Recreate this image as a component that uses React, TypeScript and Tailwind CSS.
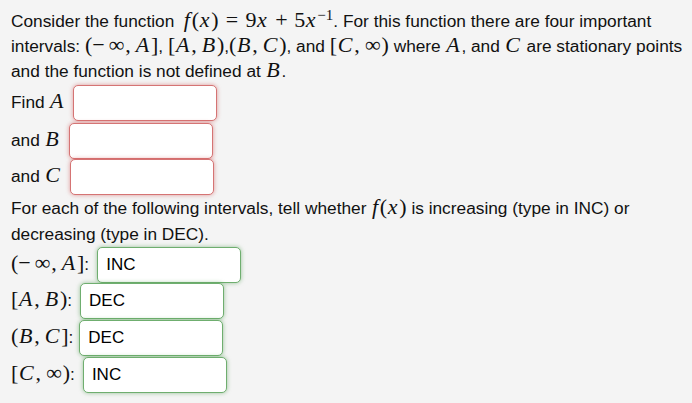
import React from 'react';

const Mi: React.FC<{ children: React.ReactNode }> = ({ children }) => (
  <i className="font-['Liberation_Serif',serif] italic pl-[0.03em] pr-[0.08em]">{children}</i>
);

const M: React.FC<{ children: React.ReactNode; className?: string }> = ({ children, className = '' }) => (
  <span className={`font-['Liberation_Serif',serif] text-[22px] leading-none not-italic ${className}`}>{children}</span>
);

const Rel: React.FC<{ children: React.ReactNode }> = ({ children }) => (
  <span className="mx-[0.33em]">{children}</span>
);

const Bin: React.FC<{ children: React.ReactNode }> = ({ children }) => (
  <span className="mx-[0.3em]">{children}</span>
);

const Comma = () => <span className="mr-[0.2em]">,</span>;

const Inf = () => <span className="px-[0.04em]">∞</span>;

const Minus = () => <span className="pr-[0.14em]">−</span>;

const AnswerBox: React.FC<{ value?: string; ok?: boolean }> = ({ value = '', ok }) => (
  <div
    className={`h-[36px] w-[144px] shrink-0 rounded-[5px] border bg-white pl-[8px] flex items-center text-[17px] text-black ${
      ok
        ? 'border-[#6fae6f] shadow-[0_0_4px_rgba(90,160,90,0.6)]'
        : 'border-[#d57474] shadow-[0_0_4px_rgba(210,90,90,0.6)]'
    }`}
  >
    {value}
  </div>
);

export default function App() {
  return (
    <div className="min-h-[403px] w-[692px] overflow-hidden bg-[#f4f4f4] pl-[11px] pt-[9px] font-['Liberation_Sans',Arial,sans-serif] text-[17.3px] text-[#111]">
      <div className="leading-[25px]">
        <div className="whitespace-nowrap">
          Consider the function{' '}
          <M className="ml-[4px]">
            <Mi>f</Mi>(<Mi>x</Mi>)<Rel>=</Rel>9<Mi>x</Mi>
            <Bin>+</Bin>5<Mi>x</Mi>
            <sup className="text-[15px]">−1</sup>
          </M>
          . For this function there are four important
        </div>
        <div className="whitespace-nowrap">
          intervals:{' '}
          <M>
            (<Minus />
            <Inf />
            <Comma />
            <Mi>A</Mi>]
          </M>
          ,{' '}
          <M>
            [<Mi>A</Mi>
            <Comma />
            <Mi>B</Mi>)
          </M>
          ,
          <M>
            (<Mi>B</Mi>
            <Comma />
            <Mi>C</Mi>)
          </M>
          , and{' '}
          <M>
            [<Mi>C</Mi>
            <Comma />
            <Inf />)
          </M>{' '}
          where{' '}
          <M>
            <Mi>A</Mi>
          </M>
          , and{' '}
          <M>
            <Mi>C</Mi>
          </M>{' '}
          are stationary points
        </div>
        <div className="whitespace-nowrap">
          and the function is not defined at{' '}
          <M>
            <Mi>B</Mi>
          </M>
          .
        </div>
      </div>

      <div className="mt-[1px] flex items-center">
        <span className="mr-[8px] whitespace-nowrap">
          Find{' '}
          <M>
            <Mi>A</Mi>
          </M>
        </span>
        <AnswerBox />
      </div>
      <div className="mt-[2px] flex items-center">
        <span className="mr-[8px] whitespace-nowrap">
          and{' '}
          <M>
            <Mi>B</Mi>
          </M>
        </span>
        <AnswerBox />
      </div>
      <div className="flex items-center">
        <span className="mr-[8px] whitespace-nowrap">
          and{' '}
          <M>
            <Mi>C</Mi>
          </M>
        </span>
        <AnswerBox />
      </div>

      <div className="leading-[26px]">
        <div className="whitespace-nowrap">
          For each of the following intervals, tell whether{' '}
          <M>
            <Mi>f</Mi>(<Mi>x</Mi>)
          </M>{' '}
          is increasing (type in INC) or
        </div>
        <div className="whitespace-nowrap">decreasing (type in DEC).</div>
      </div>

      <div className="flex items-center">
        <span className="mr-[8px] whitespace-nowrap">
          <M>
            (<Minus />
            <Inf />
            <Comma />
            <Mi>A</Mi>]
          </M>
          :
        </span>
        <AnswerBox value="INC" ok />
      </div>
      <div className="flex items-center">
        <span className="mr-[8px] whitespace-nowrap">
          <M>
            [<Mi>A</Mi>
            <Comma />
            <Mi>B</Mi>)
          </M>
          :
        </span>
        <AnswerBox value="DEC" ok />
      </div>
      <div className="mt-px flex items-center">
        <span className="mr-[6px] whitespace-nowrap">
          <M>
            (<Mi>B</Mi>
            <Comma />
            <Mi>C</Mi>]
          </M>
          :
        </span>
        <AnswerBox value="DEC" ok />
      </div>
      <div className="mt-px flex items-center">
        <span className="mr-[8px] whitespace-nowrap">
          <M>
            [<Mi>C</Mi>
            <Comma />
            <Inf />)
          </M>
          :
        </span>
        <AnswerBox value="INC" ok />
      </div>
    </div>
  );
}
